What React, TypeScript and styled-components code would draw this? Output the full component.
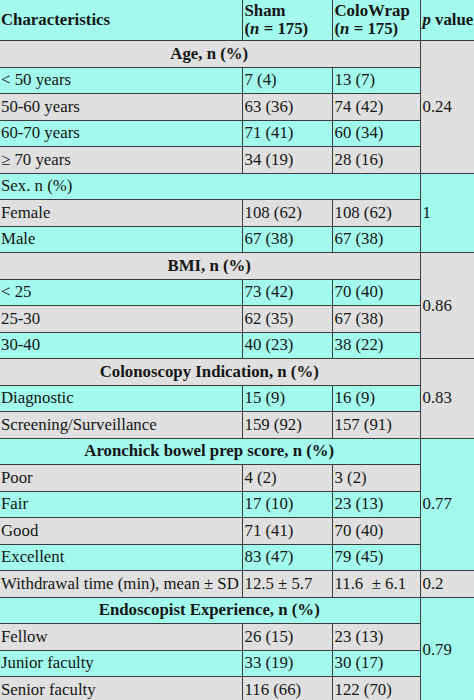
import React from "react"
import styled, { createGlobalStyle } from "styled-components"

const CYAN = "#a2f9ec"
const GRAY = "#dfe0df"
const LINE = "#3c3c3c"

const GlobalStyle = createGlobalStyle`
  html, body {
    margin: 0;
    padding: 0;
    background: #ffffff;
    overflow: hidden;
  }
  body {
    font-family: "Liberation Serif", "DejaVu Serif", serif;
    color: #161616;
  }
`

const Page = styled.div`
  width: 474px;
  height: 700px;
  overflow: hidden;
`

const Table = styled.table`
  width: 478px;
  table-layout: fixed;
  border-collapse: collapse;
  font-size: 16.8px;
  line-height: 18px;
`

const Col = styled.col<{ $w: number }>`
  width: ${(p) => p.$w}px;
`

const Cell = styled.td<{ $bg: string; $bold?: boolean; $center?: boolean }>`
  background: ${(p) => p.$bg};
  height: 25.5px;
  padding: 0 2px;
  border-top: 1.5px solid ${LINE};
  border-bottom: 1.5px solid ${LINE};
  border-left: 1px solid ${LINE};
  border-right: 1px solid ${LINE};
  font-weight: ${(p) => (p.$bold ? 700 : 400)};
  text-align: ${(p) => (p.$center ? "center" : "left")};
  vertical-align: middle;
  white-space: pre;
  overflow: hidden;

  &:first-child {
    border-left: none;
    padding-left: 1px;
  }
`

const HeadCell = styled(Cell)`
  height: 40px;
  border-top: none;
  font-weight: 700;
  white-space: nowrap;
`

const Ital = styled.i`
  font-style: italic;
`

type Row = { label: string; sham: string; colo: string }
type Group = {
  heading?: string
  plainHeading?: boolean
  rows: Row[]
  p: string
  pBg: string
}

const groups: Group[] = [
  {
    heading: "Age, n (%)",
    rows: [
      { label: "< 50 years", sham: "7 (4)", colo: "13 (7)" },
      { label: "50-60 years", sham: "63 (36)", colo: "74 (42)" },
      { label: "60-70 years", sham: "71 (41)", colo: "60 (34)" },
      { label: "≥ 70 years", sham: "34 (19)", colo: "28 (16)" },
    ],
    p: "0.24",
    pBg: GRAY,
  },
  {
    heading: "Sex. n (%)",
    plainHeading: true,
    rows: [
      { label: "Female", sham: "108 (62)", colo: "108 (62)" },
      { label: "Male", sham: "67 (38)", colo: "67 (38)" },
    ],
    p: "1",
    pBg: CYAN,
  },
  {
    heading: "BMI, n (%)",
    rows: [
      { label: "< 25", sham: "73 (42)", colo: "70 (40)" },
      { label: "25-30", sham: "62 (35)", colo: "67 (38)" },
      { label: "30-40", sham: "40 (23)", colo: "38 (22)" },
    ],
    p: "0.86",
    pBg: GRAY,
  },
  {
    heading: "Colonoscopy Indication, n (%)",
    rows: [
      { label: "Diagnostic", sham: "15 (9)", colo: "16 (9)" },
      { label: "Screening/Surveillance", sham: "159 (92)", colo: "157 (91)" },
    ],
    p: "0.83",
    pBg: GRAY,
  },
  {
    heading: "Aronchick bowel prep score, n (%)",
    rows: [
      { label: "Poor", sham: "4 (2)", colo: "3 (2)" },
      { label: "Fair", sham: "17 (10)", colo: "23 (13)" },
      { label: "Good", sham: "71 (41)", colo: "70 (40)" },
      { label: "Excellent", sham: "83 (47)", colo: "79 (45)" },
    ],
    p: "0.77",
    pBg: CYAN,
  },
  {
    rows: [
      {
        label: "Withdrawal time (min), mean ± SD",
        sham: "12.5 ± 5.7",
        colo: "11.6  ± 6.1",
      },
    ],
    p: "0.2",
    pBg: GRAY,
  },
  {
    heading: "Endoscopist Experience, n (%)",
    rows: [
      { label: "Fellow", sham: "26 (15)", colo: "23 (13)" },
      { label: "Junior faculty", sham: "33 (19)", colo: "30 (17)" },
      { label: "Senior faculty", sham: "116 (66)", colo: "122 (70)" },
    ],
    p: "0.79",
    pBg: CYAN,
  },
]

function App() {
  // row stripes alternate from the header (cyan) downwards
  let idx = 1
  const bgFor = () => (idx++ % 2 === 0 ? CYAN : GRAY)

  const body: React.ReactNode[] = []
  groups.forEach((g, gi) => {
    const span = g.rows.length + (g.heading ? 1 : 0)
    let pPlaced = false
    const pCell = () => {
      if (pPlaced) return null
      pPlaced = true
      return (
        <Cell $bg={g.pBg} rowSpan={span}>
          {g.p}
        </Cell>
      )
    }

    if (g.heading) {
      const bg = bgFor()
      body.push(
        <tr key={`h${gi}`}>
          <Cell $bg={bg} colSpan={3} $bold={!g.plainHeading} $center={!g.plainHeading}>
            {g.heading}
          </Cell>
          {pCell()}
        </tr>
      )
    }
    g.rows.forEach((r, ri) => {
      const bg = bgFor()
      body.push(
        <tr key={`r${gi}-${ri}`}>
          <Cell $bg={bg}>{r.label}</Cell>
          <Cell $bg={bg}>{r.sham}</Cell>
          <Cell $bg={bg}>{r.colo}</Cell>
          {pCell()}
        </tr>
      )
    })
  })

  return (
    <Page>
      <GlobalStyle />
      <Table>
        <colgroup>
          <Col $w={242} />
          <Col $w={90} />
          <Col $w={88} />
          <Col $w={58} />
        </colgroup>
        <thead>
          <tr>
            <HeadCell $bg={CYAN}>Characteristics</HeadCell>
            <HeadCell $bg={CYAN}>
              Sham
              <br />(<Ital>n</Ital> = 175)
            </HeadCell>
            <HeadCell $bg={CYAN}>
              ColoWrap
              <br />(<Ital>n</Ital> = 175)
            </HeadCell>
            <HeadCell $bg={CYAN}>
              <Ital>p</Ital> value
            </HeadCell>
          </tr>
        </thead>
        <tbody>{body}</tbody>
      </Table>
    </Page>
  )
}

export default App
